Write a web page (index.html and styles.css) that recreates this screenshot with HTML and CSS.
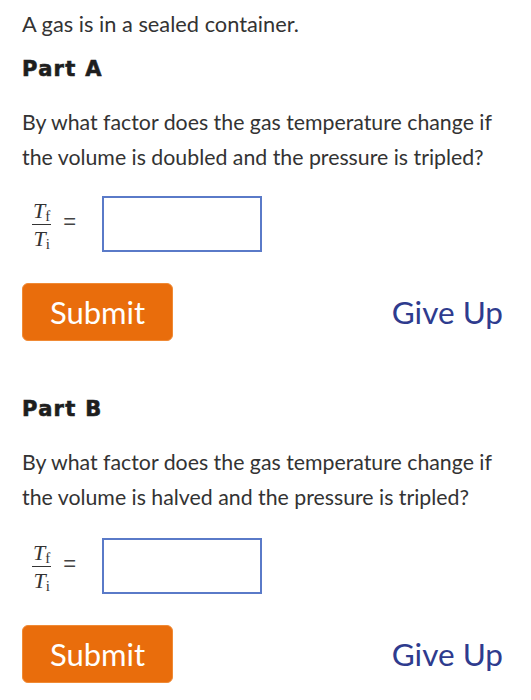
FILE: index.html
```html
<!DOCTYPE html>
<html>
<head>
<meta charset="utf-8">
<link rel="stylesheet" href="styles.css">
</head>
<body>
<div class="page">
  <p class="intro">A gas is in a sealed container.</p>

  <section class="part part-a">
    <h2 class="part-title">Part A</h2>
    <p class="question">By what factor does the gas temperature change if the volume is doubled and the pressure is tripled?</p>
    <div class="answer-row">
      <span class="frac">
        <span class="num"><i>T</i><sub>f</sub></span>
        <span class="den"><i>T</i><sub>i</sub></span>
      </span>
      <span class="eq">=</span>
      <span class="input"></span>
    </div>
    <div class="actions">
      <button class="submit">Submit</button>
      <span class="giveup">Give Up</span>
    </div>
  </section>

  <section class="part part-b">
    <h2 class="part-title">Part B</h2>
    <p class="question">By what factor does the gas temperature change if the volume is halved and the pressure is tripled?</p>
    <div class="answer-row">
      <span class="frac">
        <span class="num"><i>T</i><sub>f</sub></span>
        <span class="den"><i>T</i><sub>i</sub></span>
      </span>
      <span class="eq">=</span>
      <span class="input"></span>
    </div>
    <div class="actions">
      <button class="submit">Submit</button>
      <span class="giveup">Give Up</span>
    </div>
  </section>
</div>
</body>
</html>
```

FILE: styles.css
```css
html, body {
  margin: 0;
  padding: 0;
  background: #ffffff;
}
body {
  font-family: Lato, "Open Sans", sans-serif;
  color: #333333;
}
.page {
  padding: 6px 22px 0 22px;
}
.intro {
  margin: 0;
  font-size: 21.8px;
  line-height: 35px;
}
.part-title {
  margin: 14px 0 0 0;
  font-family: "DejaVu Sans", sans-serif;
  font-size: 21px;
  font-weight: bold;
  letter-spacing: 1.3px;
  line-height: 28px;
  color: #1e1e1e;
  -webkit-text-stroke: 0.6px #1e1e1e;
}
.question {
  margin: 22px 0 0 0;
  max-width: 484px;
  font-size: 21.3px;
  line-height: 35px;
}
.answer-row {
  display: flex;
  align-items: center;
  margin-top: 21px;
  height: 56px;
}
.part-b .answer-row {
  margin-top: 23px;
}
.frac {
  display: inline-flex;
  flex-direction: column;
  align-items: center;
  margin-left: 10px;
  font-family: "Liberation Serif", serif;
  font-size: 22px;
  color: #333;
}
.frac .num {
  line-height: 23px;
  padding: 0 1px 2px 1px;
  border-bottom: 1px solid #333;
}
.frac .den {
  line-height: 23px;
  padding-top: 2px;
}
.frac sub {
  font-style: normal;
  font-size: 15px;
  vertical-align: -3px;
  line-height: 0;
}
.eq {
  margin-left: 12px;
  margin-top: -4px;
  font-family: "Liberation Sans", sans-serif;
  font-size: 22px;
  color: #444;
}
.input {
  display: block;
  margin-left: 26px;
  width: 156px;
  height: 52px;
  border: 2px solid #5a7ac8;
  box-sizing: content-box;
}
.actions {
  display: flex;
  justify-content: space-between;
  align-items: center;
  margin-top: 31px;
  padding-right: 6px;
}
.submit {
  width: 151px;
  height: 58px;
  background: #e96d0c;
  border: 1px solid #f08a35;
  border-radius: 6px;
  color: #ffffff;
  font-family: Lato, "Open Sans", sans-serif;
  font-size: 31px;
  padding: 0;
}
.giveup {
  font-size: 31.5px;
  color: #2e3b8e;
}
.part-b {
  margin-top: 54px;
}
```
